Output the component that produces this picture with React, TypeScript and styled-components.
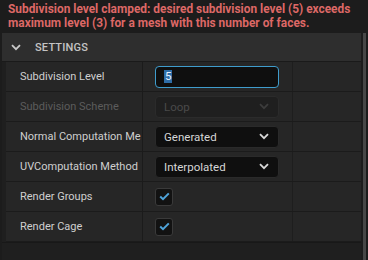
import styled, { createGlobalStyle } from 'styled-components'

const GlobalStyle = createGlobalStyle`
  html, body {
    margin: 0;
    padding: 0;
    background: #1c1c1c;
  }
  * {
    box-sizing: border-box;
  }
`

const Frame = styled.div`
  width: 368px;
  height: 260px;
  display: flex;
  overflow: hidden;
  background: #1c1c1c;
  font-family: Roboto, 'Liberation Sans', sans-serif;
`

const Main = styled.div`
  flex: 1;
  display: flex;
  flex-direction: column;
  min-width: 0;
`

const ErrorText = styled.div`
  padding: 3px 0 0 8px;
  height: 33px;
  color: #dd6866;
  font-weight: 700;
  font-size: 11.9px;
  line-height: 13.5px;
  white-space: nowrap;
`

const Panel = styled.div`
  flex: 1;
  display: flex;
  flex-direction: column;
  margin-left: 2px;
  border-left: 4px solid #1f1f1f;
`

const Header = styled.div`
  height: 29px;
  display: flex;
  align-items: center;
  gap: 14px;
  padding-left: 9px;
  background: #2e2e2e;
  border-bottom: 1px solid #1a1a1a;
  color: #c4c4c4;
  font-size: 11px;
  font-weight: 500;
  letter-spacing: 0.2px;
  margin-left: -4px;
`

const Row = styled.div`
  height: 30px;
  display: grid;
  grid-template-columns: 137px 150px 1fr;
  background: #262626;
  border-bottom: 1px solid #1b1b1b;
`

const Label = styled.div<{ $disabled?: boolean }>`
  display: flex;
  align-items: center;
  padding-left: 14px;
  white-space: nowrap;
  overflow: hidden;
  font-size: 11px;
  color: ${({ $disabled }) => ($disabled ? '#5c5c5c' : '#cfcfcf')};
  border-right: 1px solid #1b1b1b;
`

const ValueCell = styled.div`
  display: flex;
  align-items: center;
  padding-left: 12px;
  border-right: 1px solid #1e1e1e;
`

const Spare = styled.div``

const Field = styled.div<{ $focused?: boolean; $disabled?: boolean }>`
  width: 124px;
  height: 22px;
  display: flex;
  align-items: center;
  justify-content: space-between;
  padding: 0 9px 0 8px;
  border-radius: 4px;
  font-size: 11.5px;
  background: ${({ $disabled }) => ($disabled ? '#1f1f1f' : '#0f0f0f')};
  color: ${({ $disabled }) => ($disabled ? '#4a4a4a' : '#d6d6d6')};
  border: 1px solid
    ${({ $focused, $disabled }) =>
      $focused ? '#3f9ccc' : $disabled ? '#2b2b2b' : '#2a2a2a'};
`

const Selected = styled.span`
  background: #2f6ea8;
  color: #e8f2ff;
  padding: 0 1px;
  line-height: 13px;
`

const CheckBox = styled.div`
  width: 18px;
  height: 18px;
  border-radius: 3px;
  background: #121212;
  border: 1px solid #3a3a3a;
  display: flex;
  align-items: center;
  justify-content: center;
`

const Footer = styled.div`
  flex: 1;
  background: #1f1f1f;
  border-top: 1px solid #181818;
  margin-left: -4px;
`

const ScrollTrack = styled.div`
  width: 7px;
  display: flex;
  justify-content: center;
  padding-top: 33px;
`

const ScrollThumb = styled.div`
  width: 3px;
  height: 100%;
  background: #474747;
`

function Chevron({ color = '#d8d8d8' }: { color?: string }) {
  return (
    <svg width="10" height="7" viewBox="0 0 10 7">
      <path d="M1 1.2 L5 5.2 L9 1.2" fill="none" stroke={color} strokeWidth="1.8" />
    </svg>
  )
}

function Check() {
  return (
    <svg width="11" height="9" viewBox="0 0 11 9">
      <path d="M1.2 4.6 L4 7.2 L9.8 1.4" fill="none" stroke="#4ea3d9" strokeWidth="2" />
    </svg>
  )
}

function App() {
  return (
    <Frame>
      <GlobalStyle />
      <Main>
        <ErrorText>
          Subdivision level clamped: desired subdivision level (5) exceeds
          <br />
          maximum level (3) for a mesh with this number of faces.
        </ErrorText>
        <Panel>
          <Header>
            <Chevron color="#c8c8c8" />
            <span>SETTINGS</span>
          </Header>
          <Row>
            <Label>Subdivision Level</Label>
            <ValueCell>
              <Field $focused>
                <Selected>5</Selected>
              </Field>
            </ValueCell>
            <Spare />
          </Row>
          <Row>
            <Label $disabled>Subdivision Scheme</Label>
            <ValueCell>
              <Field $disabled>
                <span>Loop</span>
                <Chevron color="#3c3c3c" />
              </Field>
            </ValueCell>
            <Spare />
          </Row>
          <Row>
            <Label>Normal Computation Me</Label>
            <ValueCell>
              <Field>
                <span>Generated</span>
                <Chevron />
              </Field>
            </ValueCell>
            <Spare />
          </Row>
          <Row>
            <Label>UVComputation Method</Label>
            <ValueCell>
              <Field>
                <span>Interpolated</span>
                <Chevron />
              </Field>
            </ValueCell>
            <Spare />
          </Row>
          <Row>
            <Label>Render Groups</Label>
            <ValueCell>
              <CheckBox>
                <Check />
              </CheckBox>
            </ValueCell>
            <Spare />
          </Row>
          <Row>
            <Label>Render Cage</Label>
            <ValueCell>
              <CheckBox>
                <Check />
              </CheckBox>
            </ValueCell>
            <Spare />
          </Row>
          <Footer />
        </Panel>
      </Main>
      <ScrollTrack>
        <ScrollThumb />
      </ScrollTrack>
    </Frame>
  )
}

export default App
